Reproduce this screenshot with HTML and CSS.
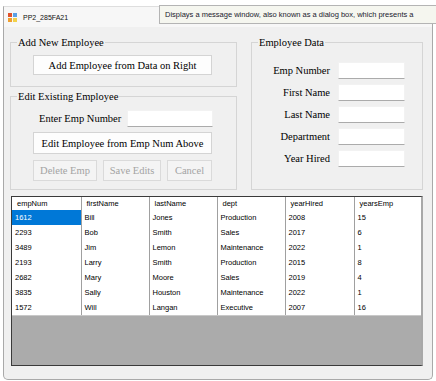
FILE: index.html
```html
<!DOCTYPE html>
<html lang="en">
<head>
    <meta charset="UTF-8">
    <meta name="viewport" content="width=device-width, initial-scale=1.0">
    <title>PP2_285FA21</title>
    <link rel="stylesheet" href="styles.css">
</head>
<body>
    <div class="window">
        <div class="titlebar">
            <svg class="app-icon" width="9" height="9" viewBox="0 0 9 9">
                <rect x="0" y="0" width="4" height="4" fill="#e0522a"/>
                <rect x="5" y="0" width="4" height="4" fill="#5aa0e6"/>
                <rect x="0" y="5" width="4" height="4" fill="#f0a030"/>
                <rect x="5" y="5" width="4" height="4" fill="#f2d24a"/>
            </svg>
            <span class="title">PP2_285FA21</span>
        </div>
        <div class="client">
            <div class="top">
                <div class="left-col">
                    <fieldset class="group group-add">
                        <legend>Add New Employee</legend>
                        <div class="group-body">
                            <button class="btn btn-wide">Add Employee from Data on Right</button>
                        </div>
                    </fieldset>
                    <fieldset class="group group-edit">
                        <legend>Edit Existing Employee</legend>
                        <div class="group-body">
                            <div class="find-row">
                                <label for="findNum">Enter Emp Number</label>
                                <input type="text" id="findNum" class="txt txt-find">
                            </div>
                            <button class="btn btn-wide btn-edit">Edit Employee from Emp Num Above</button>
                            <div class="btn-row">
                                <button class="btn btn-delete" disabled>Delete Emp</button>
                                <button class="btn btn-save" disabled>Save Edits</button>
                                <button class="btn btn-cancel" disabled>Cancel</button>
                            </div>
                        </div>
                    </fieldset>
                </div>
                <fieldset class="group group-data">
                    <legend>Employee Data</legend>
                    <div class="data-form">
                        <label for="empNum">Emp Number</label>
                        <input type="text" id="empNum" class="txt">
                        <label for="firstName">First Name</label>
                        <input type="text" id="firstName" class="txt">
                        <label for="lastName">Last Name</label>
                        <input type="text" id="lastName" class="txt">
                        <label for="dept">Department</label>
                        <input type="text" id="dept" class="txt">
                        <label for="yearHired">Year Hired</label>
                        <input type="text" id="yearHired" class="txt">
                    </div>
                </fieldset>
            </div>
            <div class="grid">
                <table>
                    <colgroup>
                        <col class="col-a">
                        <col class="col-b">
                        <col class="col-b">
                        <col class="col-b">
                        <col class="col-a">
                        <col class="col-c">
                    </colgroup>
                    <thead>
                        <tr>
                            <th>empNum</th>
                            <th>firstName</th>
                            <th>lastName</th>
                            <th>dept</th>
                            <th>yearHired</th>
                            <th>yearsEmp</th>
                        </tr>
                    </thead>
                    <tbody>
                        <tr><td class="selected">1612</td><td>Bill</td><td>Jones</td><td>Production</td><td>2008</td><td>15</td></tr>
                        <tr><td>2293</td><td>Bob</td><td>Smith</td><td>Sales</td><td>2017</td><td>6</td></tr>
                        <tr><td>3489</td><td>Jim</td><td>Lemon</td><td>Maintenance</td><td>2022</td><td>1</td></tr>
                        <tr><td>2193</td><td>Larry</td><td>Smith</td><td>Production</td><td>2015</td><td>8</td></tr>
                        <tr><td>2682</td><td>Mary</td><td>Moore</td><td>Sales</td><td>2019</td><td>4</td></tr>
                        <tr><td>3835</td><td>Sally</td><td>Houston</td><td>Maintenance</td><td>2022</td><td>1</td></tr>
                        <tr><td>1572</td><td>Will</td><td>Langan</td><td>Executive</td><td>2007</td><td>16</td></tr>
                    </tbody>
                </table>
            </div>
        </div>
    </div>
    <div class="tooltip">Displays a message window, also known as a dialog box, which presents a</div>
</body>
</html>
```

FILE: styles.css
```css
body {
    margin: 0;
    width: 436px;
    height: 381px;
    overflow: hidden;
    background: #fff;
    font-family: "Liberation Serif", "Times New Roman", serif;
    font-size: 10.5px;
    color: #000;
    position: relative;
}
.window {
    margin: 6px 0 0 3px;
    width: 428px;
    height: 372px;
    border: 1px solid #a9a9a9;
    border-top-color: #dedede;
    border-radius: 0 0 5px 5px;
    background: #f0f0f0;
    overflow: hidden;
}
.titlebar {
    height: 20px;
    display: flex;
    align-items: center;
    padding-left: 4px;
    background: #f7f7f7;
}
.app-icon {
    display: block;
}
.title {
    margin-left: 6px;
    font-family: "Liberation Sans", Arial, sans-serif;
    font-size: 7px;
    color: #111;
}
.client {
    padding: 9px 8px 0 6px;
}
.top {
    display: flex;
    gap: 14px;
}
.left-col {
    width: 227px;
    display: flex;
    flex-direction: column;
    gap: 3px;
}
.group {
    margin: 0;
    padding: 0;
    min-width: 0;
    border: 1px solid #d5d5d5;
}
.group legend {
    margin-left: 6px;
    padding: 0 1px;
    line-height: 13px;
    font-size: 10.5px;
}
.group-body {
    padding-left: 22px;
}
.group-add .group-body {
    padding-top: 6px;
    padding-bottom: 11px;
}
.group-edit .group-body {
    padding-top: 7px;
    padding-bottom: 8px;
}
.btn {
    font-family: "Liberation Serif", "Times New Roman", serif;
    font-size: 10.5px;
    color: #000;
    background: #fdfdfd;
    border: 1px solid #d4d4d4;
    padding: 0;
    display: block;
}
.btn:disabled {
    color: #a3a3a3;
    background: #f4f4f4;
    border-color: #dadada;
}
.btn-wide {
    width: 179px;
    height: 20px;
}
.btn-edit {
    height: 22px;
    margin-top: 5px;
}
.find-row {
    display: flex;
    align-items: center;
    padding-left: 6px;
}
.find-row label {
    flex: none;
    white-space: nowrap;
}
.txt {
    box-sizing: border-box;
    height: 17px;
    background: #fff;
    border: 1px solid #f2f2f2;
    border-bottom-color: #ababab;
    padding: 0;
    margin: 0;
}
.txt-find {
    width: 86px;
    margin-left: 6px;
}
.btn-row {
    display: flex;
    gap: 6px;
    margin-top: 6px;
}
.btn-row .btn {
    height: 21px;
}
.btn-delete {
    width: 64px;
}
.btn-save {
    width: 58px;
}
.btn-cancel {
    width: 45px;
}
.group-data {
    width: 170px;
}
.data-form {
    display: grid;
    grid-template-columns: 78px 67px;
    column-gap: 8px;
    row-gap: 5px;
    align-items: center;
    padding-top: 13px;
}
.data-form label {
    text-align: right;
    line-height: 17px;
    white-space: nowrap;
}
.grid {
    margin-top: 6px;
    margin-left: 1px;
    width: 409px;
    height: 168px;
    border: 1px solid #3a3a3a;
    border-right: 2px solid #a8a8a8;
    background: #ababab;
}
.grid table {
    border-collapse: collapse;
    table-layout: fixed;
    width: 409px;
    background: #fff;
    font-family: "Liberation Sans", Arial, sans-serif;
    font-size: 7.5px;
}
.col-a {
    width: 69px;
}
.col-b {
    width: 68px;
}
.col-c {
    width: 67px;
}
.grid th,
.grid td {
    border-right: 1px solid #a0a0a0;
    text-align: left;
    white-space: nowrap;
    overflow: hidden;
    padding: 0 0 0 3px;
}
.grid th:last-child,
.grid td:last-child {
    border-right: none;
}
.grid th {
    height: 13px;
    font-weight: normal;
    padding-left: 5px;
}
.grid td {
    height: 15px;
}
.grid tbody tr:last-child td {
    border-bottom: 1px solid #c8c8c8;
}
.grid td.selected {
    background: #0078d7;
    color: #fff;
}
.tooltip {
    position: absolute;
    left: 159px;
    top: 5px;
    width: 271px;
    height: 17px;
    padding-left: 5px;
    white-space: nowrap;
    overflow: hidden;
    background: #f5f6ef;
    border: 1px solid #b4b4b4;
    border-right: none;
    font-family: "Liberation Sans", Arial, sans-serif;
    font-size: 7.5px;
    line-height: 17px;
    color: #1a1a2e;
}
```
